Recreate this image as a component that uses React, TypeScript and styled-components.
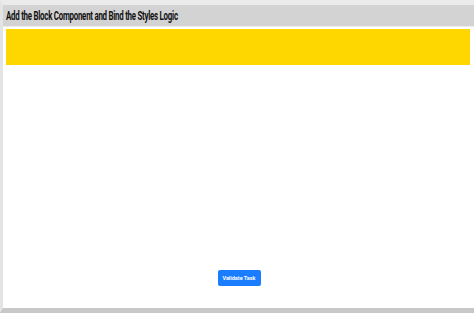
import styled, {createGlobalStyle} from 'styled-components';

const GlobalStyle = createGlobalStyle`
  html, body {
    margin: 0;
    padding: 0;
    background: #ffffff;
  }
`;

const Frame = styled.div`
  box-sizing: border-box;
  width: 474px;
  height: 313px;
  display: flex;
  flex-direction: column;
  background: #ffffff;
  border-top: 5px solid #ebebeb;
  border-left: 3px solid #e4e4e4;
  border-bottom: 5px solid #c8c8c8;
  font-family: Roboto, 'Liberation Sans', sans-serif;
`;

const Header = styled.div`
  height: 21px;
  display: flex;
  align-items: center;
  padding-left: 3px;
  background: #d3d3d3;
  border-bottom: 1px solid #ececec;
`;

const Title = styled.h1`
  margin: 0;
  font-size: 12px;
  font-weight: 700;
  color: #111111;
  letter-spacing: -0.4px;
  transform: scaleX(0.66);
  transform-origin: left center;
  white-space: nowrap;
`;

const Body = styled.div`
  flex: 1;
  display: flex;
  flex-direction: column;
  align-items: center;
  padding: 2px 4px 0 3px;
`;

const Block = styled.div`
  align-self: stretch;
  height: 36px;
  background: #ffd700;
`;

const ValidateButton = styled.button`
  margin-top: 205px;
  margin-left: 2px;
  width: 43px;
  height: 16px;
  padding: 0;
  border: none;
  border-radius: 2px;
  background: #1a7dff;
  color: #ffffff;
  font-family: Roboto, 'Liberation Sans', sans-serif;
  font-size: 5.5px;
  font-weight: 700;
  cursor: pointer;
`;

export default function App() {
  return (
    <>
      <GlobalStyle />
      <Frame>
        <Header>
          <Title>Add the Block Component and Bind the Styles Logic</Title>
        </Header>
        <Body>
          <Block />
          <ValidateButton>Validate Task</ValidateButton>
        </Body>
      </Frame>
    </>
  );
}
